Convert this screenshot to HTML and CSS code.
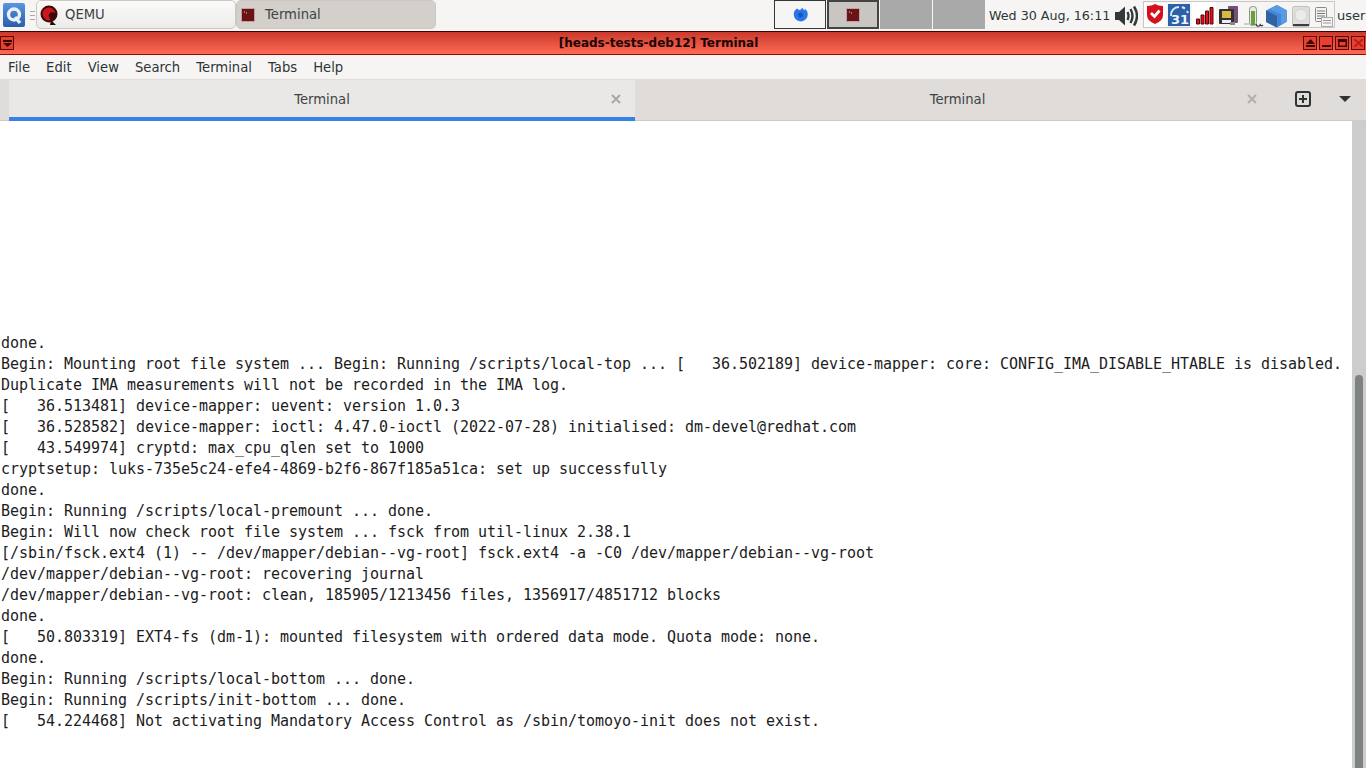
FILE: index.html
```html
<!DOCTYPE html>
<html lang="en">
<head>
<meta charset="utf-8">
<title>Terminal</title>
<link rel="stylesheet" href="styles.css">
</head>
<body>
<div class="panel">
  <div class="launcher">
    <svg width="22" height="24" viewBox="0 0 22 24"><defs><linearGradient id="q" x1="0" y1="0" x2="0" y2="1"><stop offset="0" stop-color="#5b95e2"/><stop offset="1" stop-color="#2a5cab"/></linearGradient></defs><rect width="22" height="24" rx="2" fill="url(#q)"/><circle cx="11" cy="11.500" r="5.500" fill="none" stroke="#eaf1fb" stroke-width="3.400"/><path d="M12 14l5 6" stroke="#eaf1fb" stroke-width="3.400"/></svg>
  </div>
  <div class="grip"><i></i><i></i><i></i></div>
  <div class="task task-active">
    <svg width="18" height="20" viewBox="0 0 18 20"><circle cx="9" cy="9" r="8.500" fill="#3a0a0a"/><path d="M2.500 10a6.500 6.500 0 0 1 11-5.500l2 3.500-4.500-1-2.500 3 2 5.500a7 7 0 0 1-8-5.500z" fill="#c9171e"/><path d="M11 15l5 5h-6z" fill="#2a0808"/></svg>
    <span>QEMU</span>
  </div>
  <div class="task">
    <svg width="14" height="14" viewBox="0 0 14 14"><rect x=".5" y=".5" width="13" height="13" rx="1" fill="#6b1418" stroke="#c4a0a0"/><path d="M3 4h1M5 5h1" stroke="#ddd"/></svg>
    <span>Terminal</span>
  </div>
  <div class="pager">
    <div class="desk desk-one">
      <svg width="15" height="15" viewBox="0 0 15 15"><path d="M4 1.500a7 7 0 1 0 7.500 0l.5 2-2-1.500-1-1.500-1 2-2 .5z" fill="#2a76e8"/><circle cx="7.500" cy="8" r="2.500" fill="#1a56b8"/></svg>
    </div>
    <div class="desk desk-two">
      <svg width="14" height="14" viewBox="0 0 14 14"><rect x=".5" y=".5" width="13" height="13" rx="1" fill="#6b1418" stroke="#c4a0a0"/><path d="M3 4h1M5 5h1" stroke="#ddd"/></svg>
    </div>
    <div class="desk desk-empty"></div>
    <div class="desk desk-empty"></div>
  </div>
  <div class="clock">Wed 30 Aug, 16:11</div>
  <svg class="volume" width="23" height="22" viewBox="0 0 23 22"><path d="M0 7h4l6-5.500v19L4 15H0z" fill="#33393b"/><path d="M12.500 7q2 4 0 8M15.500 4q4 7 0 14M19 1.500q6 9.500 0 19" fill="none" stroke="#33393b" stroke-width="2.400"/></svg>
  <div class="tray">
    <svg width="24" height="26" viewBox="0 0 24 26"><rect y="1" width="22" height="24" fill="#fff"/><path d="M3 4q5 0 8-2 3 2 8 2v9q0 6-8 9-8-3-8-9z" fill="#d5101c"/><path d="M7 11l3.500 3.500 5-6" fill="none" stroke="#fff" stroke-width="2.800"/></svg>
    <svg width="24" height="26" viewBox="0 0 24 26"><rect y="2" width="22" height="22" fill="#2b61a6"/><path d="M3 14a8 8 0 0 1 8-9M14 5l3 1.500M19 9l1 2" fill="none" stroke="#dce8f6" stroke-width="2"/><text x="12" y="22" class="tray-date">31</text></svg>
    <svg width="24" height="26" viewBox="0 0 24 26"><rect width="24" height="25" fill="#fff"/><path d="M4.500 17h3v5h-3zM9 13h3v9H9zM13.500 9h3v13h-3zM18 5.500h3V22h-3z" fill="#e01018" stroke="#5a0306"/></svg>
    <svg width="24" height="26" viewBox="0 0 24 26"><rect x="12" y="4" width="10" height="17" rx="1" fill="#75507b"/><rect x="3" y="7" width="15" height="15" rx="1" fill="#2e3436"/><rect x="6" y="9" width="9" height="7" fill="#d9b93f"/><rect x="6" y="18" width="9" height="3" fill="#eee"/><rect x="14" y="20" width="5" height="3" fill="#888"/></svg>
    <svg width="24" height="26" viewBox="0 0 24 26"><path d="M9 22H4" stroke="#ccc" stroke-width="2"/><rect x="9.500" y="4.500" width="7" height="19" rx="3" fill="#e8e8e4" stroke="#8a948c"/><rect x="11" y="9" width="4" height="14" fill="#6aa03a"/><path d="M16 22q1 3 3 2t1-2q1 3 3 1" fill="none" stroke="#333" stroke-width="1.200"/></svg>
    <svg width="24" height="26" viewBox="0 0 24 26"><path d="M13 3l10 5.500v11l-10 6-11-5.500V8.500z" fill="#4587d6"/><path d="M2 8.500l11 5.500v11.500L2 20z" fill="#2c5f9f" opacity=".9"/><path d="M5 7l8-4 10 5.500v11l-6 3.500V12z" fill="#5a9ae4"/></svg>
    <svg width="24" height="26" viewBox="0 0 24 26"><rect x="4.500" y="4.500" width="17" height="20" rx="2" fill="#dededc" stroke="#c0c0be"/><circle cx="13" cy="13" r="6" fill="#ebebea" stroke="#d2d2d0"/><rect x="5" y="22" width="16" height="2" fill="#3c3c3c"/></svg>
    <svg width="24" height="26" viewBox="0 0 24 26"><rect x="3.500" y="5.500" width="11" height="14" rx="1" fill="#f4f4f2" stroke="#8a8a88"/><path d="M5 9h8M5 11.500h8M5 14h8M5 16.500h5" stroke="#777"/><rect x="9.500" y="15.500" width="11" height="9" fill="#f4f4f2" stroke="#aaa"/><path d="M11 18.500h8M11 21h8" stroke="#999"/></svg>
  </div>
  <div class="user">user</div>
</div>
<div class="titlebar">
  <div class="wbtn wbtn-menu"><svg width="9" height="7" viewBox="0 0 9 7"><path d="M0 0h9v2H0zM0 3h9L4.500 7z" fill="#3a0505"/></svg></div>
  <div class="title">[heads-tests-deb12] Terminal</div>
  <div class="wbtns">
    <div class="wbtn"><svg width="9" height="8" viewBox="0 0 9 8"><path d="M4.500 0L9 5H0zM0 6h9v2H0z" fill="#3a0505"/></svg></div>
    <div class="wbtn"><svg width="9" height="8" viewBox="0 0 9 8"><path d="M0 6h9v2H0z" fill="#3a0505"/></svg></div>
    <div class="wbtn"><svg width="9" height="8" viewBox="0 0 9 8"><path d="M0 0h9v8H0zM1.500 3v3.500h6V3z" fill="#3a0505" fill-rule="evenodd"/></svg></div>
    <div class="wbtn"><svg width="9" height="8" viewBox="0 0 9 8"><path d="M0 0l9 8M9 0L0 8" stroke="#b52018" stroke-width="2"/></svg></div>
  </div>
</div>
<nav class="menubar">
  <span>File</span><span>Edit</span><span>View</span><span>Search</span><span>Terminal</span><span>Tabs</span><span>Help</span>
</nav>
<div class="tabbar">
  <div class="tab tab-on"><span class="tab-label">Terminal</span><svg class="tab-close" width="10" height="10" viewBox="0 0 10 10"><path d="M1 1l8 8M9 1L1 9" stroke="#a8a8a6" stroke-width="2"/></svg></div>
  <div class="tab tab-off"><span class="tab-label">Terminal</span><svg class="tab-close" width="10" height="10" viewBox="0 0 10 10"><path d="M1 1l8 8M9 1L1 9" stroke="#b0aeaa" stroke-width="2"/></svg></div>
  <div class="tab-actions">
    <svg width="16" height="16" viewBox="0 0 16 16"><rect x="1" y="1" width="14" height="14" rx="2" fill="none" stroke="#2e3436" stroke-width="2"/><path d="M8 4v8M4 8h8" stroke="#2e3436" stroke-width="2"/></svg>
    <svg width="12" height="6" viewBox="0 0 12 6"><path d="M0 0h12L6 6z" fill="#2e3436"/></svg>
  </div>
</div>
<main class="term">
<pre class="output">done.
Begin: Mounting root file system ... Begin: Running /scripts/local-top ... [   36.502189] device-mapper: core: CONFIG_IMA_DISABLE_HTABLE is disabled.
Duplicate IMA measurements will not be recorded in the IMA log.
[   36.513481] device-mapper: uevent: version 1.0.3
[   36.528582] device-mapper: ioctl: 4.47.0-ioctl (2022-07-28) initialised: dm-devel@redhat.com
[   43.549974] cryptd: max_cpu_qlen set to 1000
cryptsetup: luks-735e5c24-efe4-4869-b2f6-867f185a51ca: set up successfully
done.
Begin: Running /scripts/local-premount ... done.
Begin: Will now check root file system ... fsck from util-linux 2.38.1
[/sbin/fsck.ext4 (1) -- /dev/mapper/debian--vg-root] fsck.ext4 -a -C0 /dev/mapper/debian--vg-root
/dev/mapper/debian--vg-root: recovering journal
/dev/mapper/debian--vg-root: clean, 185905/1213456 files, 1356917/4851712 blocks
done.
[   50.803319] EXT4-fs (dm-1): mounted filesystem with ordered data mode. Quota mode: none.
done.
Begin: Running /scripts/local-bottom ... done.
Begin: Running /scripts/init-bottom ... done.
[   54.224468] Not activating Mandatory Access Control as /sbin/tomoyo-init does not exist.</pre>
  <div class="scrollbar"><div class="thumb"></div></div>
</main>
</body>
</html>
```
FILE: styles.css
```css
html, body { margin: 0; height: 100%; overflow: hidden; background: #fff; }
body { display: flex; flex-direction: column; height: 768px; font-family: "DejaVu Sans", sans-serif; font-size: 13.2px; color: #2e3436; }
svg { display: block; flex: none; }

.panel { height: 31px; flex: none; display: flex; align-items: center; background: #f6f5f4; overflow: hidden; }
.launcher { width: 22px; margin: 0 0 1px 3px; }
.grip { width: 5px; margin: 0 1px 0 5px; display: flex; flex-direction: column; gap: 3px; }
.grip i { display: block; height: 1px; width: 5px; background: #aaa; }
.task { width: 200px; height: 29px; margin-top: -2px; box-sizing: border-box; display: flex; align-items: center; gap: 10px; padding-left: 4px; border-radius: 5px; background: #d3cfca; border: 1px solid #cdc7c2; }
.task-active { gap: 7px; padding-left: 3px; background: linear-gradient(#fafaf9, #eeecea); }
.task span { color: #3d4345; }
.pager { display: flex; margin-left: 338px; height: 29px; margin-top: -2px; gap: 1px; }
.desk { width: 52px; box-sizing: border-box; display: flex; align-items: center; justify-content: center; }
.desk-one { background: #f6f5f4; border: 1px solid #33393b; }
.desk-two { background: #c9c6c1; border: 2px solid #444; }
.desk-empty { background: #a9a9a9; }
.clock { margin-left: 4px; width: 126px; white-space: nowrap; font-size: 12.7px; }
.volume { margin-right: 5px; }
.tray { width: 192px; height: 27px; box-sizing: border-box; margin-top: -2px; display: flex; align-items: center; border: 1px solid #c8c8c8; }
.tray-date { font-size: 13px; font-weight: 700; fill: #f0f4fa; text-anchor: middle; }
.user { margin-left: 2px; white-space: nowrap; font-size: 13px; }

.titlebar { height: 24px; flex: none; box-sizing: border-box; display: flex; align-items: center; background: linear-gradient(#c9392b, #ff6a55); border-top: 1px solid #3a0505; border-bottom: 1px solid #8c0a0a; }
.title { flex: 1; text-align: center; color: #1c0404; font-weight: 700; font-size: 12px; }
.wbtns { display: flex; gap: 2px; margin-right: 1px; }
.wbtn { width: 14px; height: 14px; box-sizing: border-box; display: flex; align-items: center; justify-content: center; border: 1px solid #5a0808; background: #e8402f; }

.menubar { height: 25px; flex: none; display: flex; align-items: center; gap: 16px; padding-left: 8px; background: #f6f5f4; border-bottom: 1px solid #e0deda; box-sizing: border-box; }

.tabbar { height: 41px; flex: none; display: flex; padding-left: 9px; background: #e0dcd9; box-shadow: inset 0 -1px 0 #cfcac4; }
.tab { position: relative; display: flex; align-items: center; justify-content: center; padding-bottom: 3px; box-sizing: border-box; }
.tab-on { width: 626px; background: #e9e8e6; box-shadow: inset 0 -4px 0 #3584e4; }
.tab-off { width: 645px; }
.tab-close { position: absolute; top: 14px; }
.tab-on .tab-close { right: 14px; }
.tab-off .tab-close { right: 23px; }
.tab-label { color: #3d4345; }
.tab-actions { flex: 1; display: flex; align-items: center; gap: 28px; padding: 0 0 3px 15px; }

.term { flex: 1; min-height: 0; display: flex; background: #fff; }
.output { flex: 1; margin: 0; padding: 212px 0 0 1px; font-family: "DejaVu Sans Mono", monospace; font-size: 15px; letter-spacing: -.03px; line-height: 21px; color: #1c1c1c; white-space: pre; overflow: hidden; }
.scrollbar { width: 14px; background: #cdcdcd; display: flex; flex-direction: column; justify-content: flex-end; align-items: center; }
.thumb { width: 8px; height: 393px; border-radius: 4px 4px 0 0; background: #7e8281; }
```
